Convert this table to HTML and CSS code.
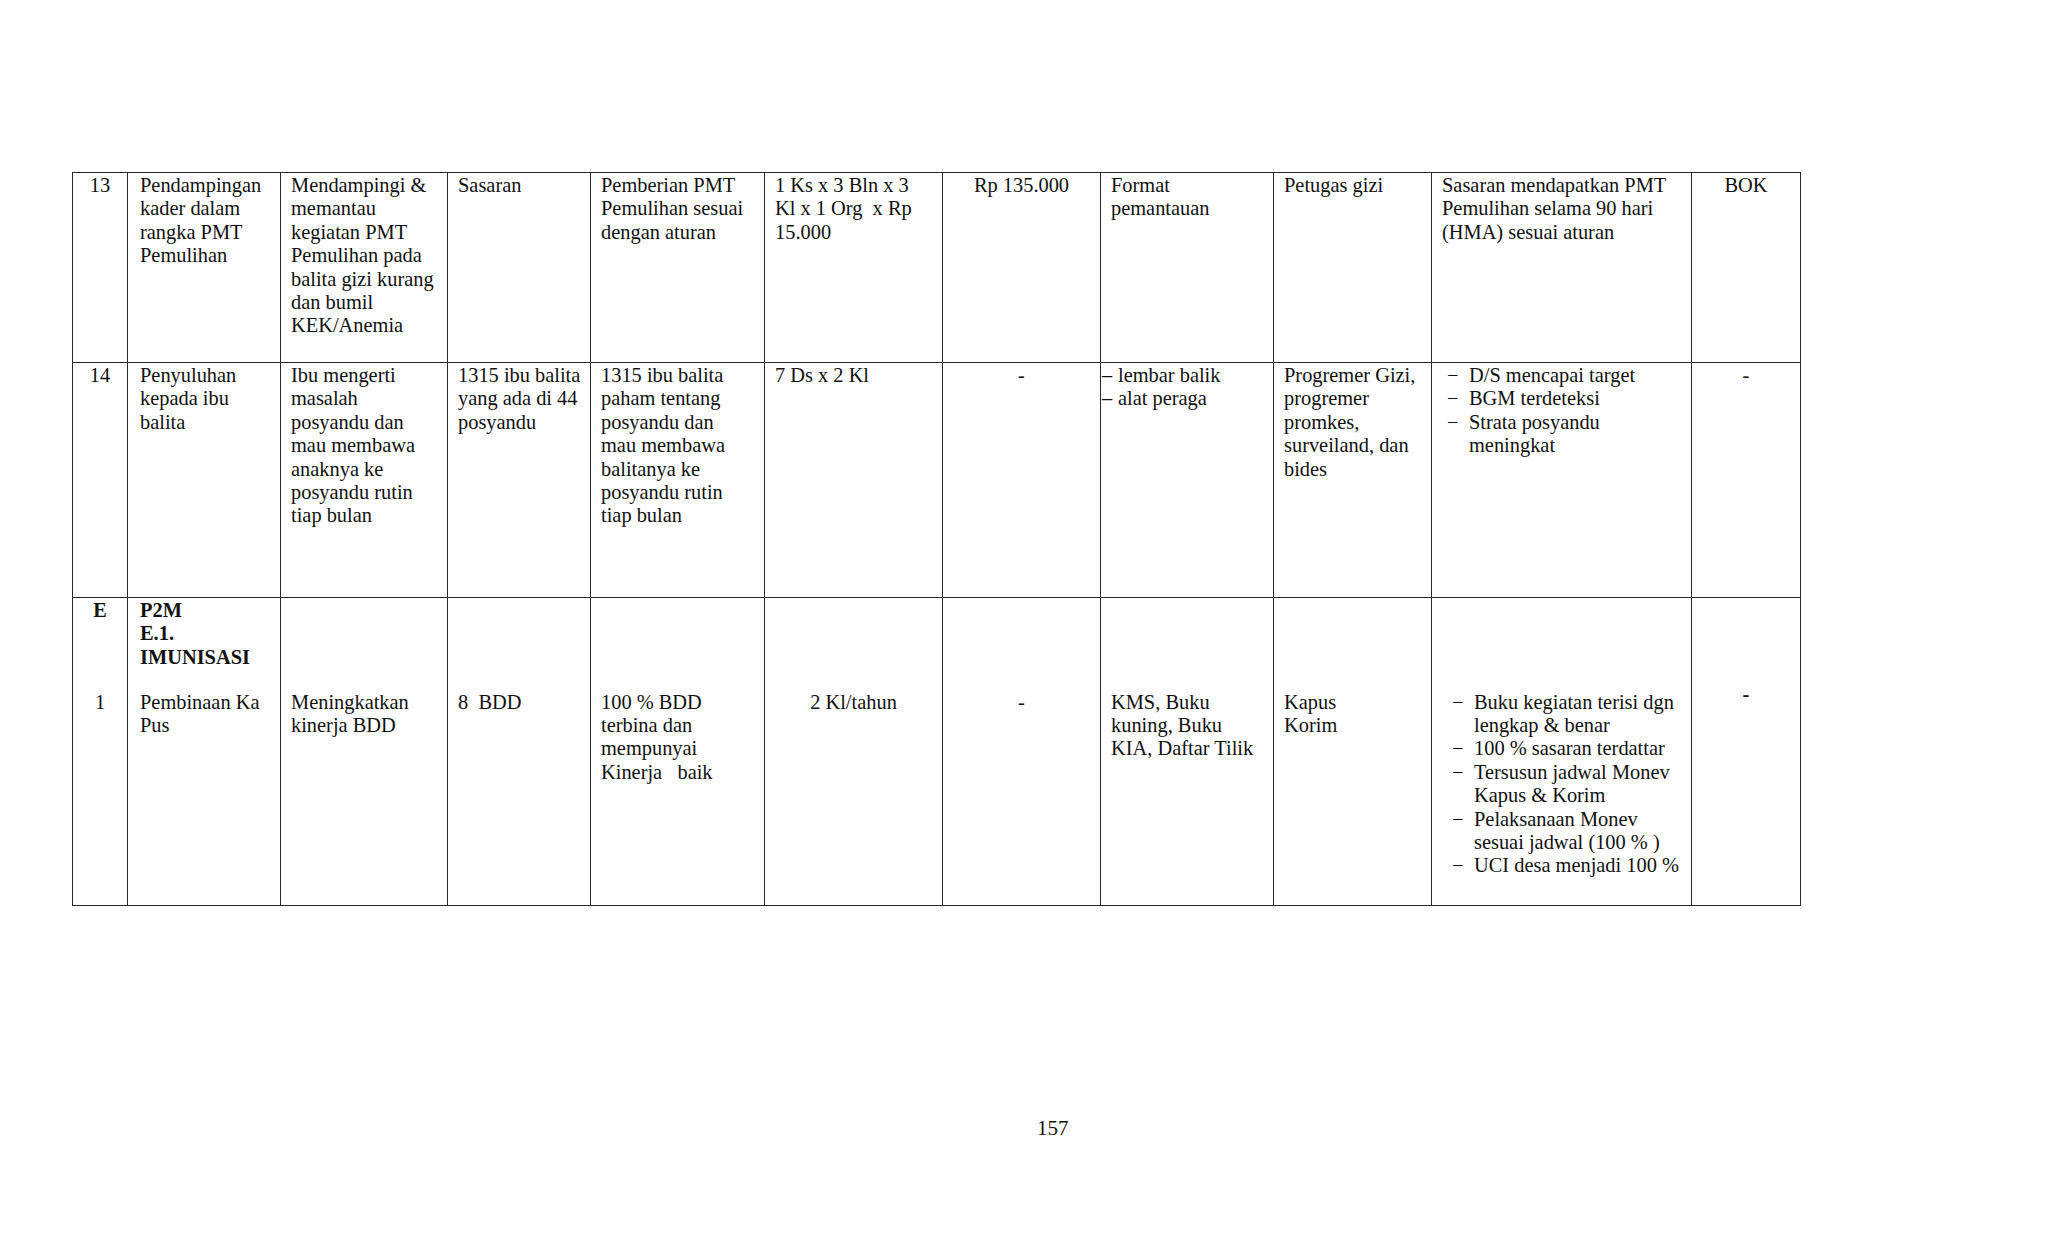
FILE: index.html
```html
<!DOCTYPE html>
<html lang="id">
<head>
<meta charset="utf-8">
<title>Halaman 157</title>
<link rel="stylesheet" href="styles.css">
</head>
<body>
<main class="page">
  <table class="grid">
    <colgroup>
      <col class="w1"><col class="w2"><col class="w3"><col class="w4"><col class="w5"><col class="w6">
      <col class="w7"><col class="w8"><col class="w9"><col class="w10"><col class="w11">
    </colgroup>
    <tbody>
      <tr class="r1">
        <td class="c">13</td>
        <td class="wide">Pendampingan<br>kader dalam<br>rangka PMT<br>Pemulihan</td>
        <td>Mendampingi &amp;<br>memantau<br>kegiatan PMT<br>Pemulihan pada<br>balita gizi kurang<br>dan bumil<br>KEK/Anemia</td>
        <td>Sasaran</td>
        <td>Pemberian PMT<br>Pemulihan sesuai<br>dengan aturan</td>
        <td>1 Ks x 3 Bln x 3<br>Kl x 1 Org &nbsp;x Rp<br>15.000</td>
        <td class="c">Rp 135.000</td>
        <td>Format<br>pemantauan</td>
        <td>Petugas gizi</td>
        <td>Sasaran mendapatkan PMT<br>Pemulihan selama 90 hari<br>(HMA) sesuai aturan</td>
        <td class="c">BOK</td>
      </tr>
      <tr class="r2">
        <td class="c">14</td>
        <td class="wide">Penyuluhan<br>kepada ibu<br>balita</td>
        <td>Ibu mengerti<br>masalah<br>posyandu dan<br>mau membawa<br>anaknya ke<br>posyandu rutin<br>tiap bulan</td>
        <td>1315 ibu balita<br>yang ada di 44<br>posyandu</td>
        <td>1315 ibu balita<br>paham tentang<br>posyandu dan<br>mau membawa<br>balitanya ke<br>posyandu rutin<br>tiap bulan</td>
        <td>7 Ds x 2 Kl</td>
        <td class="c">-</td>
        <td>
          <ul class="list list-c">
            <li><span class="mk">–</span><span>lembar balik</span></li>
            <li><span class="mk">–</span><span>alat peraga</span></li>
          </ul>
        </td>
        <td>Progremer Gizi,<br>progremer<br>promkes,<br>surveiland, dan<br>bides</td>
        <td>
          <ul class="list list-a">
            <li><span class="mk">−</span><span>D/S mencapai target</span></li>
            <li><span class="mk">−</span><span>BGM terdeteksi</span></li>
            <li><span class="mk">−</span><span>Strata posyandu<br>meningkat</span></li>
          </ul>
        </td>
        <td class="c">-</td>
      </tr>
      <tr class="r3">
        <td class="c"><div class="head"><b>E</b></div><div>1</div></td>
        <td class="wide"><div class="head"><b>P2M<br>E.1.<br>IMUNISASI</b></div><div>Pembinaan Ka<br>Pus</div></td>
        <td class="lead">Meningkatkan<br>kinerja BDD</td>
        <td class="lead">8 &nbsp;BDD</td>
        <td class="lead">100 % BDD<br>terbina dan<br>mempunyai<br>Kinerja &nbsp;&nbsp;baik</td>
        <td class="lead c">2 Kl/tahun</td>
        <td class="lead c">-</td>
        <td class="lead">KMS, Buku<br>kuning, Buku<br>KIA, Daftar Tilik</td>
        <td class="lead">Kapus<br>Korim</td>
        <td class="lead">
          <ul class="list list-b">
            <li><span class="mk">−</span><span>Buku kegiatan terisi dgn<br>lengkap &amp; benar</span></li>
            <li><span class="mk">−</span><span>100 % sasaran terdattar</span></li>
            <li><span class="mk">−</span><span>Tersusun jadwal Monev<br>Kapus &amp; Korim</span></li>
            <li><span class="mk">−</span><span>Pelaksanaan Monev<br>sesuai jadwal (100 % )</span></li>
            <li><span class="mk">−</span><span>UCI desa menjadi 100 %</span></li>
          </ul>
        </td>
        <td class="lead c"><span class="raised">-</span></td>
      </tr>
    </tbody>
  </table>
  <p class="folio">157</p>
</main>
</body>
</html>
```

FILE: styles.css
```css
html, body {
  margin: 0;
  padding: 0;
  background: #ffffff;
}

body {
  font-family: "Liberation Serif", "Times New Roman", serif;
  color: #111111;
}

.page {
  padding: 172px 0 0 72px;
}

.grid {
  border-collapse: collapse;
  table-layout: fixed;
  width: 1728px;
  font-size: 20.4px;
  line-height: 23.4px;
}

.w1 { width: 55px; }
.w2 { width: 153px; }
.w3 { width: 167px; }
.w4 { width: 143px; }
.w5 { width: 174px; }
.w6 { width: 178px; }
.w7 { width: 158px; }
.w8 { width: 173px; }
.w9 { width: 158px; }
.w10 { width: 260px; }
.w11 { width: 109px; }

.grid td {
  border: 1.5px solid #2a2a2a;
  vertical-align: top;
  padding: 1px 6px 0 10px;
  white-space: nowrap;
  overflow: visible;
}

.grid td.wide {
  padding-left: 12px;
}

.grid td.c {
  text-align: center;
  padding-left: 6px;
}

.r1 { height: 190px; }
.r2 { height: 235px; }
.r3 { height: 308px; }

.head {
  height: 91.6px;
}

.grid td.lead {
  padding-top: 92.6px;
}

.list {
  list-style: none;
  margin: 0;
  padding: 0;
}

.list li {
  display: flex;
}

.list .mk {
  flex: 0 0 auto;
  width: 22px;
}

.list-a { margin-left: 5px; }
.list-b { margin-left: 10px; }
.list-c { margin-left: -9px; }
.list-c .mk { width: 16px; }

.raised {
  line-height: 0;
  vertical-align: 8px;
  font-weight: bold;
}

.folio {
  margin: 210px 0 0 965px;
  font-size: 21px;
  line-height: 24px;
}
```
